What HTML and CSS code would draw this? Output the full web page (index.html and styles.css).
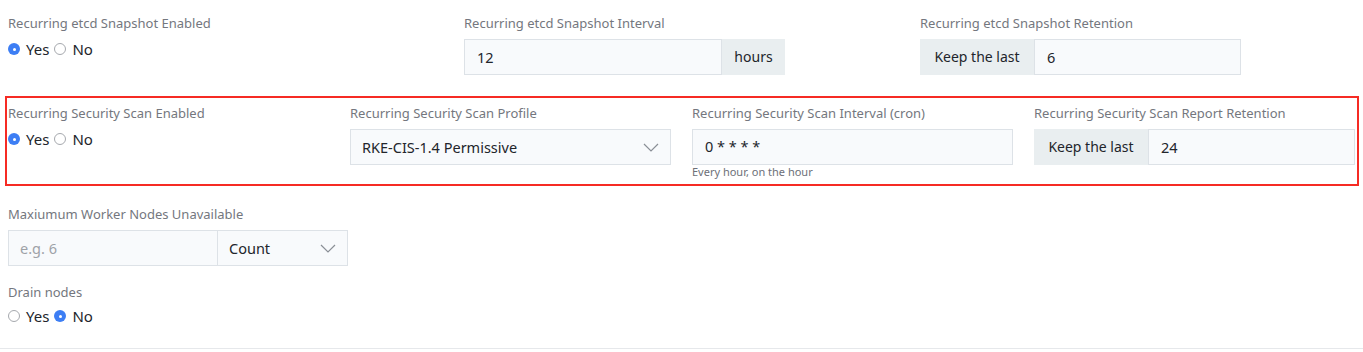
FILE: index.html
```html
<!DOCTYPE html>
<html lang="en">
<head>
  <meta charset="UTF-8" />
  <title>Cluster Options</title>
  <link rel="stylesheet" href="styles.css">
</head>
<body>

  <div class="form">

    <div class="row row-3">
      <div class="field">
        <label class="field-label">Recurring etcd Snapshot Enabled</label>
        <div class="radios">
          <span class="radio checked"></span><span class="radio-text">Yes</span>
          <span class="radio"></span><span class="radio-text">No</span>
        </div>
      </div>
      <div class="field">
        <label class="field-label">Recurring etcd Snapshot Interval</label>
        <div class="input-group">
          <div class="input">12</div>
          <div class="addon addon-hours">hours</div>
        </div>
      </div>
      <div class="field">
        <label class="field-label">Recurring etcd Snapshot Retention</label>
        <div class="input-group">
          <div class="addon addon-keep">Keep the last</div>
          <div class="input">6</div>
        </div>
      </div>
    </div>

    <div class="row row-4 highlighted">
      <div class="field">
        <label class="field-label">Recurring Security Scan Enabled</label>
        <div class="radios">
          <span class="radio checked"></span><span class="radio-text">Yes</span>
          <span class="radio"></span><span class="radio-text">No</span>
        </div>
      </div>
      <div class="field">
        <label class="field-label">Recurring Security Scan Profile</label>
        <div class="select">
          <span>RKE-CIS-1.4 Permissive</span>
          <svg class="caret" width="16" height="9" viewBox="0 0 16 9"><path d="M1 1l7 7 7-7" fill="none" stroke="#8a8f96" stroke-width="1.2"/></svg>
        </div>
      </div>
      <div class="field">
        <label class="field-label">Recurring Security Scan Interval (cron)</label>
        <div class="input cron">0 * * * *</div>
        <div class="help">Every hour, on the hour</div>
      </div>
      <div class="field">
        <label class="field-label">Recurring Security Scan Report Retention</label>
        <div class="input-group">
          <div class="addon addon-keep">Keep the last</div>
          <div class="input">24</div>
        </div>
      </div>
    </div>

    <div class="row row-3 row-bottom">
      <div class="field">
        <label class="field-label">Maxiumum Worker Nodes Unavailable</label>
        <div class="input-group worker">
          <div class="input placeholder">e.g. 6</div>
          <div class="select select-count">
            <span>Count</span>
            <svg class="caret" width="16" height="9" viewBox="0 0 16 9"><path d="M1 1l7 7 7-7" fill="none" stroke="#8a8f96" stroke-width="1.2"/></svg>
          </div>
        </div>

        <label class="field-label drain-label">Drain nodes</label>
        <div class="radios">
          <span class="radio"></span><span class="radio-text">Yes</span>
          <span class="radio checked"></span><span class="radio-text">No</span>
        </div>
      </div>
    </div>

  </div>

</body>
</html>
```

FILE: styles.css
```css
body {
  margin: 0;
  font-family: 'Noto Sans', 'Open Sans', sans-serif;
  background-color: #fff;
  color: #22252b;
}

.form {
  width: 1348px;
  padding: 14px 0 0 8px;
}

.row {
  display: grid;
  column-gap: 20px;
}

.row-3 {
  grid-template-columns: repeat(3, 1fr);
}

.row-4 {
  grid-template-columns: repeat(4, 1fr);
}

.row-3:first-child {
  height: 82px;
}

.highlighted {
  margin-left: -3px;
  width: 1348px;
  border: 2px solid #f62b24;
  padding: 6px 1px 0 1px;
  height: 80px;
}

.row-bottom {
  padding-top: 19px;
  height: 143px;
  border-bottom: 1px solid #e6e8eb;
  margin-left: -8px;
  padding-left: 8px;
  width: 1355px;
}

.field-label {
  display: block;
  font-size: 13px;
  line-height: 18px;
  color: #74777e;
  margin-bottom: 7px;
}

.drain-label {
  margin-top: 17px;
  margin-bottom: 5px;
}

.radios {
  display: flex;
  align-items: center;
  height: 20px;
  font-size: 15px;
}

.radio {
  width: 10px;
  height: 10px;
  border: 1px solid #a6a9ae;
  border-radius: 50%;
  margin-right: 6px;
  position: relative;
}

.radio.checked {
  width: 12px;
  height: 12px;
  border: none;
  background: #3d7ef4;
}

.radio.checked::after {
  content: '';
  position: absolute;
  left: 4.5px;
  top: 4.5px;
  width: 3px;
  height: 3px;
  border-radius: 50%;
  background: #fff;
}

.radio-text {
  margin-right: 5px;
}

.input-group {
  display: flex;
  width: 321px;
  height: 36px;
}

.input {
  flex: 1;
  box-sizing: border-box;
  height: 36px;
  background: #f8fafc;
  border: 1px solid #dde2e7;
  padding: 0 12px;
  font-size: 14.5px;
  line-height: 34px;
}

.input.cron {
  width: 321px;
  flex: none;
  line-height: 32px;
}

.placeholder {
  color: #9ea2a8;
  padding-left: 11px;
}

.addon {
  box-sizing: border-box;
  height: 36px;
  background: #e9eef0;
  font-size: 14px;
  line-height: 36px;
  text-align: center;
  color: #22252b;
}

.addon-hours {
  width: 63px;
}

.addon-keep {
  width: 114px;
}

.help {
  font-size: 11px;
  color: #6d7078;
  line-height: 14px;
}

.select {
  box-sizing: border-box;
  width: 321px;
  height: 36px;
  background: #f8fafc;
  border: 1px solid #dde2e7;
  display: flex;
  align-items: center;
  justify-content: space-between;
  padding: 0 11px;
  font-size: 14.5px;
}

.worker {
  width: 340px;
}

.worker .input {
  width: 210px;
  flex: none;
}

.select-count {
  width: 130px;
  border-left: none;
}
```
